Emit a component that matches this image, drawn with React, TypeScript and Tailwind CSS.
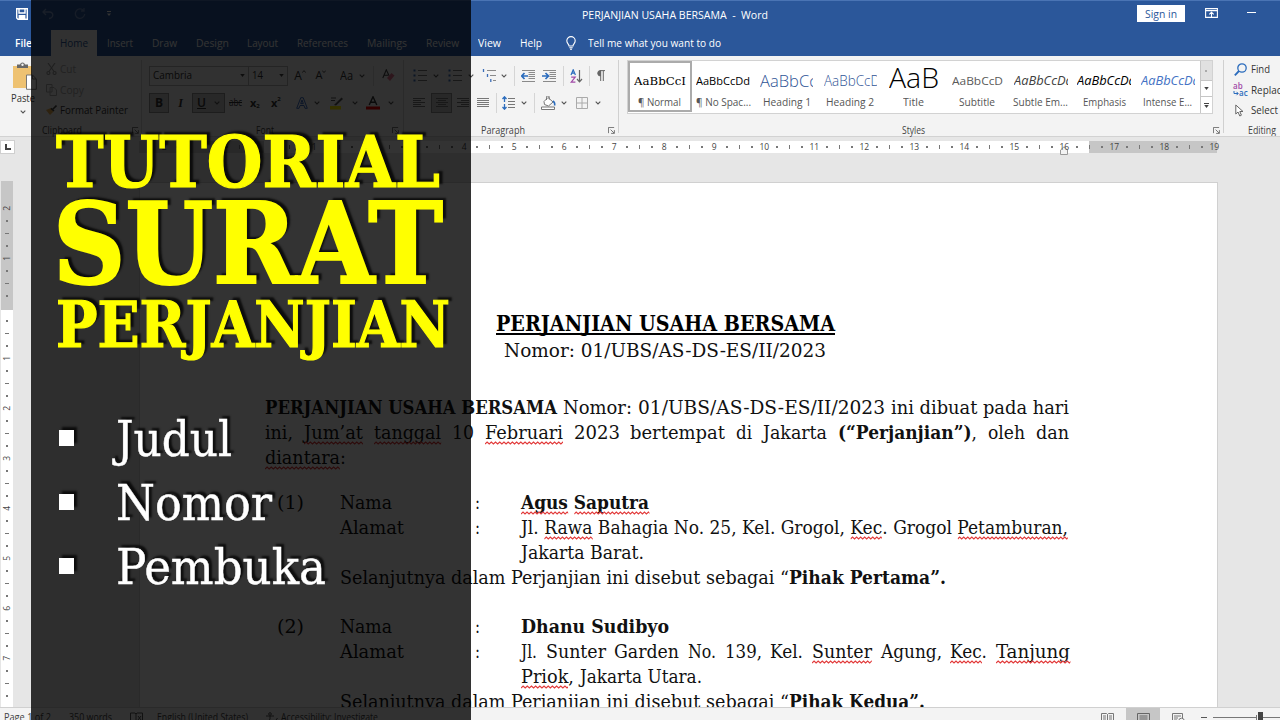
import { useLayoutEffect, useRef } from "react";
import type { ReactNode } from "react";

/** One line of text, condensed or expanded so that it takes exactly `w` pixels. */
function Fit({ w, className = "", children }: { w: number; className?: string; children: ReactNode }) {
  const ref = useRef<HTMLSpanElement>(null);
  useLayoutEffect(() => {
    const el = ref.current;
    if (!el) return;
    el.style.transform = "none";
    const natural = el.getBoundingClientRect().width;
    if (natural > 0) el.style.transform = `scaleX(${w / natural})`;
  }, [w, children]);
  return (
    <span className={`block shrink-0 whitespace-nowrap ${className}`} style={{ width: w }}>
      <span ref={ref} className="inline-block origin-left whitespace-pre">
        {children}
      </span>
    </span>
  );
}

/** Spelling-error underline. */
function Sq({ children }: { children: ReactNode }) {
  return (
    <span className="relative inline-block">
      {children}
      <svg className="absolute bottom-[0.5px] left-0 h-[4px] w-full overflow-hidden" aria-hidden="true">
        <path
          d={"M0 3" + Array.from({ length: 60 }, (_, i) => `L${i * 4 + 2} 1L${i * 4 + 4} 3`).join("")}
          fill="none"
          stroke="#e23a3a"
          strokeWidth="1.1"
        />
      </svg>
    </span>
  );
}

const Chev = ({ className = "" }: { className?: string }) => (
  <svg viewBox="0 0 6 4" className={`h-1 w-1.5 shrink-0 ${className}`} fill="none" stroke="#555" strokeWidth="1.1">
    <path d="M0.7 0.7L3 3L5.3 0.7" />
  </svg>
);

const Tri = () => (
  <svg viewBox="0 0 6 4" className="h-[3px] w-[5px] shrink-0" fill="#444">
    <path d="M0 0H6L3 4Z" />
  </svg>
);

const Launcher = () => (
  <svg viewBox="0 0 8 8" className="h-[7px] w-[7px] shrink-0" fill="none" stroke="#666" strokeWidth="1">
    <path d="M0.5 7V0.5H7M3 3L7 7M7.3 3.6V7.3H3.6" />
  </svg>
);

const Sep = ({ className = "" }: { className?: string }) => <div className={`h-[20px] w-px shrink-0 bg-[#d5d5d5] ${className}`} />;

function TitleBar() {
  return (
    <div className="flex h-[30px] border-t border-[#4a74b4] text-white">
      <div className="flex w-[582px] items-center pb-[3px] pl-4">
        <svg viewBox="0 0 12 12" className="h-3 w-3" fill="none" stroke="#fff" strokeWidth="1.4">
          <path d="M0.7 0.7H11.3V11.3H2L0.7 10Z" />
          <path d="M3 1V5H9V1" />
          <path d="M3.3 11V7.8H8.7V11" fill="#fff" />
        </svg>
        <svg viewBox="0 0 12 12" className="ml-[14px] h-3 w-3" fill="none" stroke="#7f9ac8" strokeWidth="1.3">
          <path d="M4 1L1 4L4 7M1 4H7.5C12 4 12 10 7 10.5" />
        </svg>
        <svg viewBox="0 0 12 12" className="ml-5 h-3 w-3" fill="none" stroke="#6f8cc0" strokeWidth="1.3">
          <path d="M9.5 2.5A4.7 4.7 0 1 0 10.7 6M10 0V3H7" />
        </svg>
        <svg viewBox="0 0 6 6" className="ml-5 h-1.5 w-1.5" fill="#fff">
          <path d="M1 0H5V1H1ZM1 2.5H5L3 5Z" />
        </svg>
      </div>
      <Fit w={186} className="text-[10.5px] leading-[29px] font-medium">{"PERJANJIAN USAHA BERSAMA  -  Word"}</Fit>
      <div className="flex flex-1 items-start pt-1">
        <div className="ml-[369px] flex h-[17px] w-[48px] items-center justify-center bg-white text-[#2b579a]">
          <Fit w={32} className="text-[10.5px] leading-[18px] font-medium">Sign in</Fit>
        </div>
        <svg viewBox="0 0 13 10" className="mt-[3px] ml-5 h-[10px] w-[13px]" fill="none" stroke="#fff" strokeWidth="1.1">
          <path d="M0.6 0.6H12.4V9.4H0.6ZM0.6 2.6H12.4M6.5 9V4.4M4.3 6.3L6.5 4.2L8.7 6.3" />
        </svg>
        <div className="mt-[6.5px] ml-[29px] h-[1.5px] w-[9px] bg-white" />
      </div>
    </div>
  );
}

const tabs: { label: string; w: number; gap: string }[] = [
  { label: "Insert", w: 26, gap: "ml-[10px]" },
  { label: "Draw", w: 25, gap: "ml-[19px]" },
  { label: "Design", w: 33, gap: "ml-[19px]" },
  { label: "Layout", w: 31, gap: "ml-[18px]" },
  { label: "References", w: 51, gap: "ml-[19px]" },
  { label: "Mailings", w: 40, gap: "ml-[19px]" },
  { label: "Review", w: 33, gap: "ml-[19px]" },
  { label: "View", w: 23, gap: "ml-[19px]" },
  { label: "Help", w: 22, gap: "ml-[19px]" },
];

function Tabs() {
  return (
    <div className="flex h-[27px] items-stretch pl-[15px] text-[10.5px] leading-[27px] font-medium text-white">
      <Fit w={17} className="font-semibold">File</Fit>
      <div className="ml-[19px] flex w-[46px] justify-center bg-[#f3f3f3] text-[#2b579a]">
        <Fit w={28}>Home</Fit>
      </div>
      {tabs.map((t) => (
        <Fit key={t.label} w={t.w} className={t.gap}>{t.label}</Fit>
      ))}
      <svg viewBox="0 0 10 14" className="mt-[6px] ml-6 h-[14px] w-[10px]" fill="none" stroke="#fff" strokeWidth="1.1">
        <path d="M3 10C3 8 0.8 7.5 0.8 4.8A4.2 4.2 0 0 1 9.2 4.8C9.2 7.5 7 8 7 10ZM3.3 11.7H6.7M4 13.3H6" />
      </svg>
      <Fit w={133} className="ml-3">Tell me what you want to do</Fit>
    </div>
  );
}

function Clipboard() {
  return (
    <div className="flex h-full w-[141px] flex-col">
      <div className="flex h-[65px]">
        <div className="flex w-[42px] flex-col pt-[6px]">
          <svg viewBox="0 0 24 28" className="ml-[13px] h-[28px] w-[24px]">
            <rect x="0" y="4" width="19" height="22" fill="#eec272" />
            <path d="M4 2.5H7A2.6 2.6 0 0 1 12 2.5H15V6H4Z" fill="#686868" />
            <circle cx="9.5" cy="2.8" r="1.2" fill="#f3f3f3" />
            <path d="M13.5 13H19.5L23.3 17V27.3H13.5Z" fill="#fff" stroke="#777" />
            <path d="M19.5 13V17H23" fill="none" stroke="#777" />
          </svg>
          <Fit w={24} className="ml-[11px] text-[10.5px] leading-[17px]">Paste</Fit>
          <Chev className="mt-[3px] ml-5" />
        </div>
        <div className="flex flex-col pt-[3px] pl-[4px] text-[10.5px] leading-[20.5px]">
          <div className="flex h-[20.5px] items-center gap-[3px] text-[#a8a8a8]">
            <svg viewBox="0 0 11 12" className="h-3 w-[11px]" fill="none" stroke="#999" strokeWidth="1.1">
              <path d="M2 0L8 8.5M9 0L3 8.5" />
              <circle cx="2.4" cy="10" r="1.5" />
              <circle cx="8.6" cy="10" r="1.5" />
            </svg>
            <Fit w={16}>Cut</Fit>
          </div>
          <div className="flex h-[20.5px] items-center gap-[3px] text-[#a8a8a8]">
            <svg viewBox="0 0 11 12" className="h-3 w-[11px]" fill="none" stroke="#aaa" strokeWidth="1">
              <path d="M0.5 0.5H6V8H0.5ZM4 3.5H8L10.5 6V11.5H4Z" />
            </svg>
            <Fit w={24}>Copy</Fit>
          </div>
          <div className="flex h-[20.5px] items-center gap-[3px]">
            <svg viewBox="0 0 11 12" className="h-3 w-[11px]">
              <path d="M0 6L5 4L7.5 7.5L4 11Z" fill="#e5a94e" />
              <path d="M5 4.3L8 7M7 5L10.5 1.5" stroke="#444" strokeWidth="1.6" />
            </svg>
            <Fit w={68}>Format Painter</Fit>
          </div>
        </div>
      </div>
      <div className="flex h-[15px] items-center pt-[3px] pl-[42px] text-[10px] leading-[15px] text-[#444]">
        <Fit w={40}>Clipboard</Fit>
        <div className="ml-[50px]"><Launcher /></div>
      </div>
    </div>
  );
}

function FontGroup() {
  return (
    <div className="flex h-full w-[262px] flex-col pl-[8px]">
      <div className="mt-[9.5px] flex h-[20px] items-center text-[#333]">
        <div className="flex h-[20px] w-[100px] items-center justify-between border border-[#b5b5b5] px-[3px]">
          <Fit w={39} className="text-[10.5px]">Cambria</Fit><Tri />
        </div>
        <div className="flex h-[20px] w-[39px] items-center justify-between border border-l-0 border-[#b5b5b5] px-[3px]">
          <Fit w={11} className="text-[10.5px]">14</Fit><Tri />
        </div>
        <div className="flex w-[24px] items-center justify-center text-[12px]">
          A<svg viewBox="0 0 4 3" className="mb-2 h-[3px] w-1" fill="none" stroke="#555"><path d="M0.3 2.6L2 0.6L3.7 2.6" /></svg>
        </div>
        <div className="flex w-[18px] items-center justify-center text-[11px]">
          A<svg viewBox="0 0 4 3" className="mb-2 h-[3px] w-1" fill="none" stroke="#555"><path d="M0.3 0.6L2 2.6L3.7 0.6" /></svg>
        </div>
        <Fit w={13} className="ml-[10px] text-[12px]">Aa</Fit>
        <Chev className="ml-1.5" />
        <Sep className="ml-2" />
        <svg viewBox="0 0 13 13" className="ml-2 h-[13px] w-[13px]" fill="none">
          <path d="M0.8 9L4.3 0.8L7.2 7M2 6.2H6" stroke="#444" strokeWidth="1.1" />
          <path d="M5 9L9.5 4L12.5 6.5L8 12Z" fill="#e0708c" />
        </svg>
      </div>
      <div className="mt-[7px] flex h-[20px] items-center text-[12px] text-[#333]">
        <div className="flex h-[20px] w-[20px] items-center justify-center border border-[#8f8f8f] bg-[#c5c5c5] font-bold">B</div>
        <div className="w-[23px] text-center font-[Liberation_Serif] font-bold italic">I</div>
        <div className="flex h-[20px] w-[33px] items-center justify-center gap-2 border border-[#8f8f8f] bg-[#c5c5c5]">
          <span className="font-semibold underline">U</span><Chev />
        </div>
        <Fit w={13} className="ml-[4px] text-[10px] font-medium"><span className="line-through">abc</span></Fit>
        <div className="ml-2 flex h-[14px] w-[12px] items-center text-[11px] leading-[14px] font-bold">
          x<span className="self-end text-[6px] leading-[7px]">2</span>
        </div>
        <div className="ml-[9px] flex h-[14px] w-[12px] items-center text-[11px] leading-[14px] font-bold">
          x<span className="self-start text-[6px] leading-[7px]">2</span>
        </div>
        <svg viewBox="0 0 12 12" className="ml-[13px] h-3 w-3" fill="none" stroke="#3f6fc4" strokeWidth="1">
          <path d="M0.7 11.3L4.8 0.7H7.2L11.3 11.3H9L8 8.5H4L3 11.3ZM4.7 6.6H7.3L6 3Z" />
        </svg>
        <Chev className="ml-1.5" />
        <svg viewBox="0 0 14 14" className="ml-2.5 h-3.5 w-3.5">
          <rect y="10" width="11" height="3.5" fill="#ffee00" />
          <path d="M4 9L11.5 1.5L13 3L6 9.5Z" fill="#555" />
          <path d="M1 2H6M1 4.5H5" stroke="#555" />
        </svg>
        <Chev className="ml-2" />
        <svg viewBox="0 0 14 14" className="ml-2 h-3.5 w-3.5">
          <rect y="10.5" width="14" height="3" fill="#f00000" />
          <path d="M3.2 9L7 0.8L10.8 9M4.6 6.2H9.4" fill="none" stroke="#333" strokeWidth="1.4" />
        </svg>
        <Chev className="ml-2" />
      </div>
      <div className="mt-auto flex h-[15px] items-center pt-[3px] pl-[107px] text-[10px] leading-[15px] text-[#444]">
        <Fit w={18}>Font</Fit>
        <div className="ml-[118px]"><Launcher /></div>
      </div>
    </div>
  );
}

const Lines = ({ d }: { d: string }) => (
  <svg viewBox="0 0 12 12" className="h-3 w-3" fill="none" stroke="#777" strokeWidth="1"><path d={d} /></svg>
);

function ListIcon() {
  return (
    <svg viewBox="0 0 14 13" className="h-[13px] w-[14px]" fill="none" stroke="#777">
      <path d="M5 1.5H14M5 6.5H14M5 11.5H14" />
      <path d="M0.5 1.5H2.5M0.5 6.5H2.5M0.5 11.5H2.5" stroke="#3b6db8" strokeWidth="2" />
    </svg>
  );
}

function Indent({ flip = false }: { flip?: boolean }) {
  return (
    <svg viewBox="0 0 14 12" className="h-3 w-[14px] shrink-0" fill="none" stroke="#8a8a8a">
      <path d="M1 0.5H14M7.5 2.5H14M7.5 4.5H14M7.5 6.5H14M7.5 8.5H14M1 11.5H14" />
      <path d={flip ? "M0 6H6M3.5 3L6.5 6L3.5 9" : "M1 6H7M3.5 3L0.7 6L3.5 9"} stroke="#2b6cbd" strokeWidth="1.7" />
    </svg>
  );
}

function Paragraph() {
  return (
    <div className="flex h-full w-[215px] flex-col pl-[10px]">
      <div className="mt-[9.5px] flex h-[20px] items-center">
        <ListIcon /><Chev className="ml-1.5" />
        <div className="ml-[9px]"><ListIcon /></div><Chev className="ml-1.5" />
        <svg viewBox="0 0 15 13" className="ml-2 h-[13px] w-[15px]" fill="none" stroke="#8a8a8a">
          <path d="M5 1.5H14M8 6.5H14M11 11.5H14" />
          <path d="M1.5 0V3M5.5 5V8M8.8 10V13" stroke="#3b6db8" strokeWidth="1.3" />
        </svg>
        <Chev className="ml-[4px]" />
        <Sep className="ml-[7px]" />
        <div className="ml-[6px]"><Indent /></div>
        <div className="ml-[7px]"><Indent flip /></div>
        <Sep className="ml-[7px]" />
        <svg viewBox="0 0 13 14" className="ml-[6px] h-3.5 w-[13px]" fill="none">
          <path d="M1 6L3.2 0.8L5.4 6M1.8 4.2H4.6" stroke="#2b6cbd" strokeWidth="1.2" />
          <path d="M1.2 8.2H5.2L1.2 13.2H5.4" stroke="#a24ba8" strokeWidth="1.2" />
          <path d="M9.5 1V12.5M7 10L9.5 12.8L12 10" stroke="#666" strokeWidth="1.2" />
        </svg>
        <Sep className="ml-[6px]" />
        <svg viewBox="0 0 9 11" className="ml-[6px] h-[11px] w-[9px] shrink-0" fill="none" stroke="#666" strokeWidth="1">
          <path d="M4 0.6H9M4.7 0.6V11M7.3 0.6V11" />
          <path d="M4.5 0.5A2.5 2.5 0 0 0 4.5 6Z" fill="#666" />
        </svg>
      </div>
      <div className="mt-[7px] flex h-[20px] items-center">
        <Lines d="M0 1.5H12M0 3.5H8M0 5.5H12M0 7.5H8M0 9.5H12" />
        <div className="ml-[6px] flex h-[20px] w-[21px] items-center justify-center border border-[#8f8f8f] bg-[#c5c5c5]">
          <Lines d="M0 1.5H12M2 3.5H10M0 5.5H12M2 7.5H10M0 9.5H12" />
        </div>
        <div className="ml-[5px]"><Lines d="M0 1.5H12M4 3.5H12M0 5.5H12M4 7.5H12M0 9.5H12" /></div>
        <div className="ml-[8px]"><Lines d="M0 1.5H12M0 3.5H12M0 5.5H12M0 7.5H12M0 9.5H12" /></div>
        <Sep className="ml-[7px]" />
        <svg viewBox="0 0 13 14" className="ml-[5px] h-3.5 w-[13px]" fill="none">
          <path d="M6 2.5H13M6 5.5H13M6 8.5H13M6 11.5H13" stroke="#777" />
          <path d="M2.5 1V6M0.5 3L2.5 0.8L4.5 3M2.5 8V13M0.5 11L2.5 13.2L4.5 11" stroke="#2b6cbd" strokeWidth="1.3" />
        </svg>
        <Chev className="ml-1.5" />
        <Sep className="ml-[7px]" />
        <svg viewBox="0 0 15 14" className="ml-[6px] h-3.5 w-[15px]" fill="none" stroke="#777">
          <path d="M3 5.5L7 1.5L12 6L7.5 10L3.5 8.5Z" fill="#fff" />
          <path d="M5.5 4V1.2A1.4 1.4 0 0 1 8.3 1.2V3.5" />
          <path d="M12 5C14 6.5 14 8 13.5 9.5" stroke="#2b6cbd" strokeWidth="1.6" />
          <path d="M0.5 11H13.5V13.5H0.5Z" fill="#fff" />
        </svg>
        <Chev className="ml-[5px]" />
        <svg viewBox="0 0 12 12" className="ml-[9px] h-3 w-3" fill="none" stroke="#aaa">
          <path d="M0.5 0.5H11.5V11.5H0.5ZM6 0.5V11.5M0.5 6H11.5" />
        </svg>
        <Chev className="ml-[7px]" />
      </div>
      <div className="mt-auto flex h-[15px] items-center pt-[3px] pl-[68px] text-[10px] leading-[15px] text-[#444]">
        <Fit w={44}>Paragraph</Fit>
        <div className="ml-[83px]"><Launcher /></div>
      </div>
    </div>
  );
}

/* sw is the text's full width, cw the visible part of it. */
const styles: { sample: string; sw: number; cw: string; cls: string; label: string; lw: number; box: string }[] = [
  { sample: "AaBbCcI", sw: 52, cw: "w-[52px]", cls: "font-['DejaVu_Serif'] text-[11.5px] text-black", label: "¶ Normal", lw: 43, box: "border-2 border-[#ababab]" },
  { sample: "AaBbCcDd", sw: 54, cw: "w-[54px]", cls: "text-[11.5px] text-black", label: "¶ No Spac...", lw: 55, box: "" },
  { sample: "AaBbCc", sw: 57, cw: "w-[53px]", cls: "font-light text-[16px] text-[#2f5496]", label: "Heading 1", lw: 48, box: "" },
  { sample: "AaBbCcD", sw: 56, cw: "w-[53px]", cls: "font-light text-[14px] text-[#2f5496]", label: "Heading 2", lw: 48, box: "" },
  { sample: "AaB", sw: 50, cw: "w-[50px]", cls: "font-light text-[27px] text-black -mt-[5px]", label: "Title", lw: 21, box: "" },
  { sample: "AaBbCcD", sw: 51, cw: "w-[51px]", cls: "text-[11.5px] text-[#5a5a5a]", label: "Subtitle", lw: 36, box: "" },
  { sample: "AaBbCcDd", sw: 59, cw: "w-[54px]", cls: "italic text-[12px] text-[#404040]", label: "Subtle Em...", lw: 55, box: "" },
  { sample: "AaBbCcDd", sw: 59, cw: "w-[54px]", cls: "italic text-[12px] text-black", label: "Emphasis", lw: 43, box: "" },
  { sample: "AaBbCcDd", sw: 59, cw: "w-[54px]", cls: "italic text-[12px] text-[#4472c4]", label: "Intense E...", lw: 49, box: "" },
];

function Styles() {
  return (
    <div className="flex h-full w-[605px] flex-col pl-[9px]">
      <div className="mt-[4px] flex h-[54px] w-[586px] border border-[#d2d2d2] bg-white">
        {styles.map((s) => (
          <div key={s.label} className={`box-border flex h-[51px] w-[63.5px] shrink-0 flex-col items-center overflow-hidden ${s.box}`}>
            <div className={`flex shrink-0 items-center overflow-hidden ${s.cw} ${s.box ? "h-[35px]" : "h-[37px] pt-[2px]"}`}>
              <Fit w={s.sw} className={`leading-[30px] ${s.cls}`}>{s.sample}</Fit>
            </div>
            <Fit w={s.lw} className="-mt-[2.5px] text-[10.5px] leading-[12px] text-[#555]">{s.label}</Fit>
          </div>
        ))}
        <div className="ml-auto flex w-[13px] flex-col border-l border-[#c6c6c6]">
          <div className="flex h-[19px] items-center justify-center bg-[#e1e1e1]"><span className="h-0.5 w-0.5 bg-[#aaa]" /></div>
          <div className="flex h-[17px] items-center justify-center border-y border-[#c6c6c6]"><Tri /></div>
          <div className="flex flex-1 flex-col items-center justify-center gap-px"><span className="h-px w-[5px] bg-[#444]" /><Tri /></div>
        </div>
      </div>
      <div className="mt-auto flex h-[15px] items-center pt-[3px] pl-[275px] text-[10px] leading-[15px] text-[#444]">
        <Fit w={23}>Styles</Fit>
        <div className="ml-[288px]"><Launcher /></div>
      </div>
    </div>
  );
}

function Editing() {
  return (
    <div className="flex h-full w-[57px] flex-col overflow-hidden pt-[3px] text-[10.5px] leading-[20.5px]">
      <div className="flex h-[20.5px] items-center pl-[11px]">
        <svg viewBox="0 0 13 13" className="h-[13px] w-[13px]" fill="none" stroke="#2b6cbd" strokeWidth="1.3">
          <circle cx="8" cy="5" r="4.2" /><path d="M5 8L0.8 12.3" strokeWidth="1.8" />
        </svg>
        <Fit w={19} className="ml-[4px]">Find</Fit>
      </div>
      <div className="flex h-[20.5px] items-center pl-[10px]">
        <svg viewBox="0 0 14 13" className="h-[13px] w-[14px] shrink-0 overflow-visible">
          <text x="0" y="6" fontSize="8" fontWeight="600" fill="#a24ba8" fontFamily="Open Sans">ab</text>
          <text x="6" y="13" fontSize="8" fontWeight="600" fill="#2b6cbd" fontFamily="Open Sans">ac</text>
          <path d="M1 8V10.5H5M3.5 8.8L5.2 10.5L3.5 12.2" fill="none" stroke="#2b6cbd" />
        </svg>
        <Fit w={36} className="ml-[4px]">Replace</Fit>
      </div>
      <div className="flex h-[20.5px] items-center pl-[12px]">
        <svg viewBox="0 0 9 13" className="h-[13px] w-[9px]" fill="#fff" stroke="#666">
          <path d="M0.8 1V10L3 8L4.8 12L6.4 11.2L4.8 7.5H8Z" />
        </svg>
        <Fit w={27} className="ml-[7px]">Select</Fit>
      </div>
      <Fit w={28} className="mt-auto ml-[25px] h-[15px] text-[10px] leading-[18px] text-[#444]">Editing</Fit>
    </div>
  );
}

function Ribbon() {
  const line = <div className="mt-[4px] -mr-px h-[73px] w-px shrink-0 bg-[#d0d0d0]" />;
  return (
    <div className="flex h-[81px] shrink-0 border-b border-[#d2d2d2] bg-[#f3f3f3] text-[#333]">
      <Clipboard />{line}<FontGroup />{line}<Paragraph />{line}<Styles />{line}<Editing />
    </div>
  );
}

const hMarks = Array.from({ length: 22 }, (_, i) => i - 2);
const vMarks = Array.from({ length: 10 }, (_, i) => i - 2);

function HRuler() {
  return (
    <div className="flex h-[16px] shrink-0 items-start">
      <div className="mt-[3px] flex h-[14px] w-[15px] shrink-0 items-center justify-center border border-[#cfcfcf] bg-white">
        <svg viewBox="0 0 6 6" className="h-[6px] w-[6px]" fill="none" stroke="#444" strokeWidth="2"><path d="M1 0V5H6" /></svg>
      </div>
      <div className="relative mt-[4px] ml-[124px] flex h-[12px] w-[1080px]">
        <div className="h-full w-[125px] shrink-0 bg-[#c6c6c6]" />
        <div className="h-full w-[825px] shrink-0 bg-white" />
        <div className="h-full w-[128px] bg-[#c6c6c6]" />
        <svg viewBox="0 0 8 9" className="absolute top-[5px] left-[921px] h-[9px] w-2" fill="#f3f3f3" stroke="#999">
          <path d="M0.5 8.5V4L4 0.8L7.5 4V8.5Z" />
        </svg>
        <div className="absolute top-0 left-[19px] flex h-[12px] text-[8.5px] leading-[12px] font-medium text-[#444]">
          {hMarks.map((n) => (
            <div key={n} className="flex shrink-0 items-center">
              <span className="flex w-[12.5px] justify-center">{n === 0 ? "" : Math.abs(n)}</span>
              {n < 19 && (
                <>
                  <span className="flex w-[12.5px] justify-center"><i className="h-[1.5px] w-[1.5px] bg-[#777]" /></span>
                  <span className="flex w-[12.5px] justify-center"><i className="h-[4px] w-px bg-[#777]" /></span>
                  <span className="flex w-[12.5px] justify-center"><i className="h-[1.5px] w-[1.5px] bg-[#777]" /></span>
                </>
              )}
            </div>
          ))}
        </div>
      </div>
    </div>
  );
}

function VRuler() {
  return (
    <div className="flex w-[14px] shrink-0 flex-col pt-[28px] pl-px">
      <div className="relative h-[526px] w-[12px] overflow-hidden bg-white">
        <div className="h-[129px] w-full bg-[#c6c6c6]" />
        <div className="absolute top-[21px] left-0 w-[12px] text-[8.5px] leading-none font-medium text-[#444]">
          {vMarks.map((n) => (
            <div key={n} className="flex h-[50px] flex-col items-center">
              <span className="flex h-[12.5px] items-center"><span className="-rotate-90">{n === 0 ? "" : Math.abs(n)}</span></span>
              <span className="flex h-[12.5px] items-center"><i className="h-[1.5px] w-[1.5px] bg-[#777]" /></span>
              <span className="flex h-[12.5px] items-center"><i className="h-px w-[4px] bg-[#777]" /></span>
              <span className="flex h-[12.5px] items-center"><i className="h-[1.5px] w-[1.5px] bg-[#777]" /></span>
            </div>
          ))}
        </div>
      </div>
    </div>
  );
}

function Party({ no, name, address, tail, role, roleW }: { no: string; name: ReactNode; address: ReactNode; tail: ReactNode; role: string; roleW: number }) {
  return (
    <div className="grid grid-cols-[75px_135px_46px_1fr] grid-rows-[25px_25px_25px_25px]">
      <Fit w={27} className="ml-[12px]">{no}</Fit>
      <Fit w={52}>Nama</Fit>
      <Fit w={5}>:</Fit>
      <div className="flex">{name}</div>
      <Fit w={64} className="col-start-2">Alamat</Fit>
      <Fit w={5}>:</Fit>
      <div className="flex w-[549px] justify-between">{address}</div>
      <div className="col-start-4 flex gap-[6px]">{tail}</div>
      <div className="col-span-3 col-start-2 flex">
        <Fit w={449}>Selanjutnya dalam Perjanjian ini disebut sebagai “</Fit>
        <Fit w={roleW} className="font-bold">{role}</Fit>
      </div>
    </div>
  );
}

function Page() {
  return (
    <div className="mt-[29px] ml-[125px] h-[700px] w-[1079px] shrink-0 border border-[#d0d0d0] bg-white pt-[127px] pl-[125px] font-['DejaVu_Serif_Condensed','DejaVu_Serif',serif] text-[18.8px] leading-[25px] text-[#111]">
      <div className="flex h-[27px] w-[800px] justify-center text-[22.5px] leading-[27px] font-bold text-black">
        <Fit w={339}><span className="underline decoration-2 underline-offset-[2px] [text-decoration-skip-ink:none]">PERJANJIAN USAHA BERSAMA</span></Fit>
      </div>
      <div className="flex h-[27px] w-[800px] justify-center leading-[27px]">
        <Fit w={322}>Nomor: 01/UBS/AS-DS-ES/II/2023</Fit>
      </div>
      <div className="mt-[31px] w-[804px]">
        <div className="flex justify-between">
          <Fit w={292} className="font-bold">PERJANJIAN USAHA BERSAMA</Fit>
          <div className="flex w-[506px] justify-between">
            <Fit w={69}>Nomor:</Fit>
            <Fit w={247}>01/UBS/AS-DS-ES/II/2023</Fit>
            <Fit w={178}>ini dibuat pada hari</Fit>
          </div>
        </div>
        <div className="flex justify-between">
          <Fit w={28}>ini,</Fit>
          <Fit w={59}><Sq>Jum’at</Sq></Fit>
          <Fit w={67}><Sq>tanggal</Sq></Fit>
          <Fit w={22}>10</Fit>
          <Fit w={78}><Sq>Februari</Sq></Fit>
          <Fit w={46}>2023</Fit>
          <Fit w={95}>bertempat</Fit>
          <Fit w={16}>di</Fit>
          <Fit w={64}>Jakarta</Fit>
          <Fit w={139}><b>(“Perjanjian”)</b>,</Fit>
          <Fit w={37}>oleh</Fit>
          <Fit w={33}>dan</Fit>
        </div>
        <Fit w={81}><Sq>diantara</Sq>:</Fit>
      </div>
      <div className="mt-[20px]">
        <Party
          no="(1)"
          name={<Fit w={128} className="font-bold"><Sq>Agus</Sq> <Sq>Saputra</Sq></Fit>}
          address={<Fit w={547}>Jl. <Sq>Rawa</Sq> Bahagia No. 25, Kel. Grogol, <Sq>Kec</Sq>. Grogol <Sq>Petamburan,</Sq></Fit>}
          tail={<Fit w={123}>Jakarta Barat.</Fit>}
          role="Pihak Pertama”."
          roleW={157}
        />
      </div>
      <div className="mt-[24px]">
        <Party
          no="(2)"
          name={<Fit w={148} className="font-bold">Dhanu Sudibyo</Fit>}
          address={
            <>
              <Fit w={16}>Jl.</Fit>
              <Fit w={60}>Sunter</Fit>
              <Fit w={65}>Garden</Fit>
              <Fit w={28}>No.</Fit>
              <Fit w={37}>139,</Fit>
              <Fit w={33}>Kel.</Fit>
              <Fit w={60}><Sq>Sunter</Sq></Fit>
              <Fit w={61}>Agung,</Fit>
              <Fit w={37}><Sq>Kec</Sq>.</Fit>
              <Fit w={74}><Sq>Tanjung</Sq></Fit>
            </>
          }
          tail={<><Fit w={53}><Sq>Priok</Sq>,</Fit><Fit w={122}>Jakarta Utara.</Fit></>}
          role="Pihak Kedua”."
          roleW={136}
        />
      </div>
    </div>
  );
}

function StatusBar() {
  return (
    <div className="h-[13px] shrink-0 overflow-hidden border-t border-[#d0d0d0] bg-[#f3f3f3]">
      <div className="flex h-[19px] items-center pl-1 text-[10px] text-[#444]">
        <Fit w={47}>Page 1 of 2</Fit>
        <Fit w={43} className="ml-[18px]">350 words</Fit>
        <svg viewBox="0 0 13 12" className="ml-[18px] h-3 w-[13px]" fill="none" stroke="#555"><path d="M0.5 1H5L6 2V11H0.5ZM6 2L7 1H12.5V11H6M8 4L11 8M11 4L8 8" /></svg>
        <Fit w={91} className="ml-[14px]">English (United States)</Fit>
        <svg viewBox="0 0 13 12" className="ml-[17px] h-3 w-[13px]" fill="none" stroke="#555"><circle cx="5" cy="2" r="1.3" /><path d="M1 4H9M5 4V7L2.5 11M7 9L9 11L12.5 6" /></svg>
        <Fit w={97} className="ml-[3px]">Accessibility: Investigate</Fit>
        <svg viewBox="0 0 13 12" className="ml-[723px] h-3 w-[13px] shrink-0" fill="none" stroke="#777"><path d="M0.5 1.5H5.5L6.5 2.5L7.5 1.5H12.5V11H0.5ZM6.5 2.5V11M2 4H5M2 6H5M2 8H5M8 4H11M8 6H11M8 8H11" /></svg>
        <div className="ml-[12px] flex h-full w-[34px] shrink-0 items-center justify-center bg-[#c6c6c6]">
          <svg viewBox="0 0 13 12" className="h-3 w-[13px]" fill="none" stroke="#666"><path d="M0.5 1.5H12.5V12H0.5ZM2.5 4H10.5M2.5 6H10.5M2.5 8H10.5" /></svg>
        </div>
        <svg viewBox="0 0 13 12" className="ml-[12px] h-3 w-[13px] shrink-0" fill="none" stroke="#777"><path d="M10.5 6V1.5H0.5V11H6M2 4H9M2 6H6M2 8H5" /><circle cx="9.5" cy="9" r="2.8" /></svg>
        <div className="ml-4 h-[1.5px] w-[6px] shrink-0 bg-[#555]" />
        <div className="ml-[6px] h-px w-[43px] shrink-0 bg-[#777]" />
        <div className="h-[6px] w-px shrink-0 bg-[#777]" />
        <div className="ml-px h-[12px] w-[5px] shrink-0 bg-[#444]" />
        <div className="h-px flex-1 bg-[#777]" />
      </div>
    </div>
  );
}

const topics: { text: string; w: number }[] = [
  { text: "Judul", w: 116 },
  { text: "Nomor", w: 156 },
  { text: "Pembuka", w: 210 },
];

function Promo() {
  return (
    <div className="absolute top-0 left-[31px] h-[720px] w-[440px] bg-black/80 pt-[132px] pl-[25px] font-['DejaVu_Serif_Condensed','DejaVu_Serif',serif]">
      <div className="font-bold text-[#ffff00] [text-shadow:4px_-3px_2px_rgba(0,0,0,0.75)]">
        <Fit w={384} className="h-[60px] text-[71px] leading-[60px] [-webkit-text-stroke:1.2px_#ffff00]">TUTORIAL</Fit>
        <Fit w={390} className="mt-[10px] -ml-[3px] h-[84px] text-[113px] leading-[84px] [-webkit-text-stroke:2px_#ffff00]">SURAT</Fit>
        <Fit w={394} className="mt-[14px] h-[50px] text-[64px] leading-[50px] [-webkit-text-stroke:1.2px_#ffff00]">PERJANJIAN</Fit>
      </div>
      <ul className="mt-[56px] text-white">
        {topics.map((t) => (
          <li key={t.text} className="flex h-[64px] items-center pl-[3px]">
            <span className="h-[16px] w-[15px] bg-white shadow-[3px_-3px_2px_rgba(0,0,0,0.75)]" />
            <Fit w={t.w} className="ml-[42px] pt-[3px] text-[49px] leading-[61px] [-webkit-text-stroke:0.4px_#fff] [text-shadow:3px_-3px_2px_rgba(0,0,0,0.75)]">{t.text}</Fit>
          </li>
        ))}
      </ul>
    </div>
  );
}

export default function App() {
  return (
    <div className="relative flex h-[720px] w-[1280px] flex-col overflow-hidden bg-[#e6e6e6] font-['Open_Sans','Noto_Sans',sans-serif]">
      <header className="h-[56px] shrink-0 bg-[#2b579a]">
        <TitleBar />
        <Tabs />
      </header>
      <Ribbon />
      <HRuler />
      <main className="flex min-h-0 flex-1 items-start overflow-hidden">
        <VRuler />
        <Page />
      </main>
      <StatusBar />
      <Promo />
    </div>
  );
}
